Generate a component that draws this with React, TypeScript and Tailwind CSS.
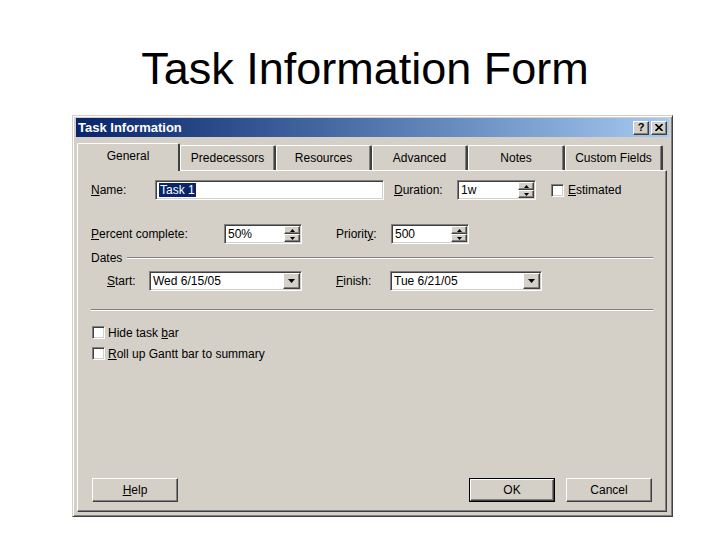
import React from 'react'

const raised =
  'border border-t-white border-l-white border-r-[#404040] border-b-[#404040] shadow-[inset_-1px_-1px_#808080] bg-[#d4d0c8]'
const sunken =
  'border border-t-[#808080] border-l-[#808080] border-r-white border-b-white shadow-[inset_1px_1px_#404040,inset_-1px_-1px_#d4d0c8]'

function Spinner() {
  return (
    <div className="flex flex-col w-[16px] h-full">
      <div className={`${raised} flex-1 flex items-center justify-center`}>
        <svg width="5" height="3" viewBox="0 0 5 3">
          <path d="M2.5 0 L5 3 L0 3 Z" fill="#000" />
        </svg>
      </div>
      <div className={`${raised} flex-1 flex items-center justify-center`}>
        <svg width="5" height="3" viewBox="0 0 5 3">
          <path d="M0 0 L5 0 L2.5 3 Z" fill="#000" />
        </svg>
      </div>
    </div>
  )
}

function DropButton() {
  return (
    <div className={`${raised} w-[17px] h-full flex items-center justify-center`}>
      <svg width="7" height="4" viewBox="0 0 7 4">
        <path d="M0 0 L7 0 L3.5 4 Z" fill="#000" />
      </svg>
    </div>
  )
}

interface FieldProps {
  width: string
  value: string
  selected?: boolean
  kind?: 'spin' | 'drop' | 'none'
}

function Field({ width, value, selected, kind = 'none' }: FieldProps) {
  return (
    <div className={`${sunken} ${width} h-[20px] bg-white flex items-stretch p-[1px]`}>
      <div className="flex-1 flex items-center pl-[2px] text-[12px] leading-none">
        {selected ? (
          <span className="bg-[#0a246a] text-white px-[1px] py-[1px]">{value}</span>
        ) : (
          <span>{value}</span>
        )}
      </div>
      {kind === 'spin' && <Spinner />}
      {kind === 'drop' && <DropButton />}
    </div>
  )
}

function CheckBox() {
  return <div className={`${sunken} w-[13px] h-[13px] bg-white shrink-0`} />
}

function Etched({ className = '' }: { className?: string }) {
  return <div className={`h-[2px] border-t border-t-[#808080] border-b border-b-white ${className}`} />
}

const tabs = [
  { label: 'Predecessors', w: 'w-[96px]' },
  { label: 'Resources', w: 'w-[96px]' },
  { label: 'Advanced', w: 'w-[96px]' },
  { label: 'Notes', w: 'w-[97px]' },
  { label: 'Custom Fields', w: 'w-[98px]' },
]

export default function App() {
  return (
    <div className="w-[728px] h-[546px] bg-white overflow-hidden font-['Liberation_Sans',Arial,sans-serif] text-black">
      <h1 className="text-center text-[45px] leading-[50px] pt-[44px] pl-[2px]">Task Information Form</h1>

      {/* Dialog window */}
      <div
        className="ml-[72px] mt-[21px] w-[601px] h-[402px] bg-[#d4d0c8] border border-t-[#d4d0c8] border-l-[#d4d0c8] border-r-[#404040] border-b-[#404040] shadow-[inset_1px_1px_#fff,inset_-1px_-1px_#808080] pt-[2px] px-[3px] pb-[4px] flex flex-col"
      >
        {/* Title bar */}
        <div className="h-[19px] bg-gradient-to-r from-[#0a246a] to-[#a6caf0] flex items-center pl-[2px] pr-[2px]">
          <span className="text-white font-bold text-[13px] leading-none">Task Information</span>
          <div className="ml-auto flex gap-[2px]">
            <div className={`${raised} w-[16px] h-[14px] flex items-center justify-center text-[11px] font-bold leading-none`}>
              ?
            </div>
            <div className={`${raised} w-[16px] h-[14px] flex items-center justify-center`}>
              <svg width="8" height="7" viewBox="0 0 8 7">
                <path d="M0.5 0 L7.5 7 M7.5 0 L0.5 7" stroke="#000" strokeWidth="1.6" />
              </svg>
            </div>
          </div>
        </div>

        {/* Tabs */}
        <div className="mt-[5px] ml-[1px] h-[28px] flex items-end relative z-10">
          <div className="w-[103px] h-[28px] -mb-px bg-[#d4d0c8] border-t border-l border-t-white border-l-white border-r-2 border-r-[#404040] rounded-t-[2px] flex items-center justify-center text-[12px] pb-[3px]">
            General
          </div>
          {tabs.map((t) => (
            <div
              key={t.label}
              className={`${t.w} h-[25px] border-t border-l border-t-white border-l-white border-r-2 border-r-[#404040] rounded-t-[2px] flex items-center justify-center text-[12px] shadow-[inset_-1px_0_#808080]`}
            >
              {t.label}
            </div>
          ))}
        </div>

        {/* Tab panel */}
        <div className="ml-[1px] mr-[2px] flex-1 flex flex-col border border-t-white border-l-white border-r-[#404040] border-b-[#404040] shadow-[inset_-1px_-1px_#808080] text-[12px]">
          {/* Name row */}
          <div className="mt-[9px] pl-[13px] flex items-center h-[20px]">
            <span className="w-[64px]">
              <u>N</u>ame:
            </span>
            <Field width="w-[229px]" value="Task 1" selected />
            <span className="ml-[10px] w-[63px]">
              <u>D</u>uration:
            </span>
            <Field width="w-[79px]" value="1w" kind="spin" />
            <div className="ml-[15px]">
              <CheckBox />
            </div>
            <span className="ml-[4px]">
              <u>E</u>stimated
            </span>
          </div>

          {/* Percent / priority */}
          <div className="mt-[24px] pl-[13px] flex items-center h-[20px]">
            <span className="w-[133px]">
              <u>P</u>ercent complete:
            </span>
            <Field width="w-[78px]" value="50%" kind="spin" />
            <span className="ml-[34px] w-[55px]">
              Priorit<u>y</u>:
            </span>
            <Field width="w-[78px]" value="500" kind="spin" />
          </div>

          {/* Dates group */}
          <div className="mt-[7px] pl-[13px] pr-[13px] flex items-center h-[14px]">
            <span>Dates</span>
            <Etched className="flex-1 ml-[5px]" />
          </div>

          <div className="mt-[6px] pl-[29px] flex items-center h-[20px]">
            <span className="w-[42px]">
              <u>S</u>tart:
            </span>
            <Field width="w-[153px]" value="Wed 6/15/05" kind="drop" />
            <span className="ml-[34px] w-[54px]">
              <u>F</u>inish:
            </span>
            <Field width="w-[152px]" value="Tue 6/21/05" kind="drop" />
          </div>

          <Etched className="mt-[18px] mx-[13px]" />

          {/* Checkboxes */}
          <div className="mt-[15px] ml-[14px] flex items-center h-[13px] gap-[3px]">
            <CheckBox />
            <span>
              Hide task <u>b</u>ar
            </span>
          </div>
          <div className="mt-[8px] ml-[14px] flex items-center h-[13px] gap-[3px]">
            <CheckBox />
            <span>
              <u>R</u>oll up Gantt bar to summary
            </span>
          </div>

          {/* Buttons */}
          <div className="mt-auto mb-[9px] mx-[14px] flex items-center">
            <button className={`${raised} w-[86px] h-[24px] text-[12px]`}>
              <u>H</u>elp
            </button>
            <div className="ml-auto border border-black">
              <button className={`${raised} w-[84px] h-[22px] text-[12px] flex items-center justify-center`}>OK</button>
            </div>
            <button className={`${raised} ml-[11px] w-[86px] h-[24px] text-[12px]`}>Cancel</button>
          </div>
        </div>
      </div>
    </div>
  )
}
